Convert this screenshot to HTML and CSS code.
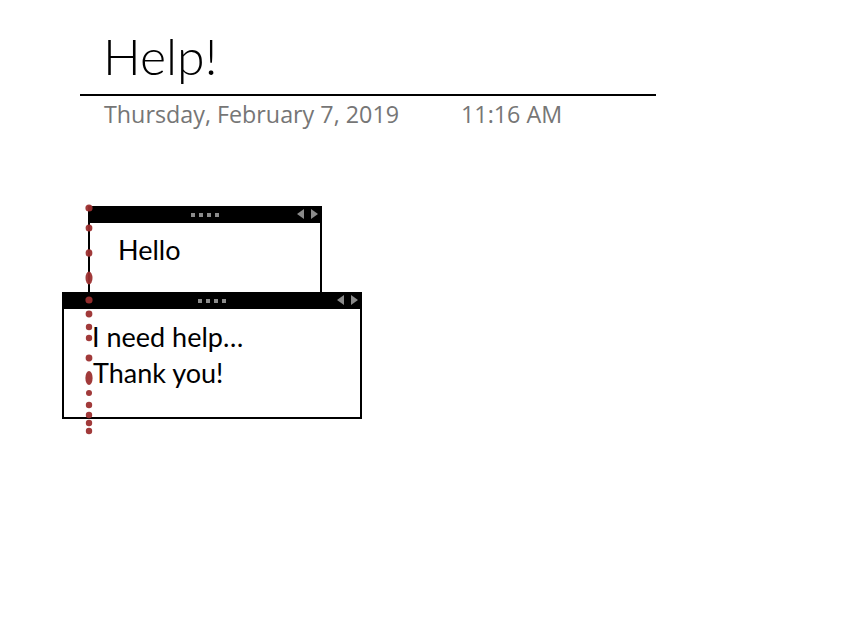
FILE: index.html
```html
<!DOCTYPE html>
<html>
<head>
<meta charset="utf-8">
<link rel="stylesheet" href="styles.css">
</head>
<body>
<div class="page">
  <header class="page-head">
    <h1 class="title">Help!</h1>
    <div class="stamp">
      <span class="date">Thursday, February 7, 2019</span>
      <span class="time">11:16 AM</span>
    </div>
  </header>
  <div class="canvas">
    <div class="note note-a">
      <div class="note-bar">
        <span class="grip"><i></i><i></i><i></i><i></i></span>
        <span class="arrows"><b class="tri-l"></b><b class="tri-r"></b></span>
      </div>
      <div class="note-body note-body-a">
        <p>Hello</p>
      </div>
    </div>
    <div class="note note-b">
      <div class="note-bar">
        <span class="grip"><i></i><i></i><i></i><i></i></span>
        <span class="arrows"><b class="tri-l"></b><b class="tri-r"></b></span>
      </div>
      <div class="note-body note-body-b">
        <p>I need help…</p>
        <p class="indent">Thank you!</p>
      </div>
    </div>
    <svg class="ink" width="12" height="240" viewBox="0 0 12 240">
      <g fill="#9c3030" opacity="0.95">
        <ellipse cx="6" cy="4" rx="3.6" ry="3.6"/>
        <ellipse cx="6" cy="24" rx="3.4" ry="3.6"/>
        <ellipse cx="6" cy="49" rx="3.4" ry="3.8"/>
        <ellipse cx="6" cy="74" rx="3.5" ry="6.5"/>
        <ellipse cx="6" cy="96" rx="3.6" ry="3.6"/>
        <ellipse cx="6" cy="110" rx="3.4" ry="3.4"/>
        <ellipse cx="6" cy="123" rx="3.2" ry="3.2"/>
        <ellipse cx="6" cy="134" rx="3.2" ry="3.2"/>
        <ellipse cx="6" cy="154" rx="3.4" ry="3.4"/>
        <ellipse cx="6" cy="174" rx="3.6" ry="7"/>
        <ellipse cx="6" cy="189" rx="3" ry="3"/>
        <ellipse cx="6" cy="201" rx="3.2" ry="3.2"/>
        <ellipse cx="6" cy="211" rx="3.2" ry="3.2"/>
        <ellipse cx="6" cy="219" rx="3.2" ry="3.2"/>
        <ellipse cx="6" cy="227" rx="3.2" ry="3.2"/>
      </g>
    </svg>
  </div>
</div>
</body>
</html>
```

FILE: styles.css
```css
html, body {
  margin: 0;
  padding: 0;
  background: #ffffff;
}

.page {
  position: relative;
  width: 842px;
  height: 628px;
  overflow: hidden;
  font-family: Lato, "Open Sans", sans-serif;
  color: #000;
}

.page-head {
  margin-left: 80px;
  width: 576px;
}

.title {
  margin: 0;
  padding: 28px 0 9px 23px;
  height: 57px;
  font-size: 50px;
  line-height: 57px;
  font-weight: 300;
  border-bottom: 2px solid #000;
}

.stamp {
  display: flex;
  gap: 62px;
  margin-top: 3px;
  padding-left: 24px;
  font-family: "Open Sans", Lato, sans-serif;
  font-size: 23.3px;
  line-height: 30px;
  color: #767676;
}

.canvas {
  position: absolute;
  left: 0;
  top: 0;
  width: 842px;
  height: 628px;
}

.note {
  position: absolute;
  display: flex;
  flex-direction: column;
  background: #fff;
}

.note-a {
  left: 88px;
  top: 206px;
  width: 234px;
  height: 100px;
}

.note-b {
  left: 62px;
  top: 292px;
  width: 300px;
  height: 127px;
}

.note-bar {
  position: relative;
  height: 17px;
  background: #000;
  display: flex;
  align-items: center;
  justify-content: center;
}

.grip {
  display: flex;
  gap: 4px;
}

.grip i {
  display: block;
  width: 4px;
  height: 4px;
  background: #8c8c8c;
}

.arrows {
  position: absolute;
  right: 4px;
  top: 3px;
  display: flex;
  gap: 7px;
}

.tri-l, .tri-r {
  display: block;
  width: 0;
  height: 0;
  border-top: 5.5px solid transparent;
  border-bottom: 5.5px solid transparent;
}

.tri-l {
  border-right: 7px solid #8a8a8a;
}

.tri-r {
  border-left: 7px solid #8a8a8a;
}

.note-body {
  flex: 1;
  border: 2px solid #000;
  border-top: none;
  font-size: 27px;
  line-height: 36px;
}

.note-body p {
  margin: 0;
}

.note-body-a {
  padding: 9px 0 0 28px;
}

.note-body-b {
  padding: 10px 0 0 28px;
}

.note-body-b .indent {
  padding-left: 1px;
}

.ink {
  position: absolute;
  left: 83px;
  top: 204px;
}
```
